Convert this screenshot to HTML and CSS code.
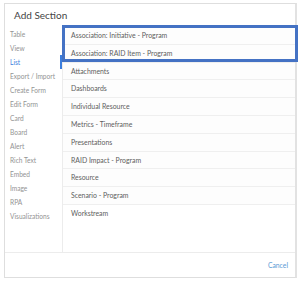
FILE: index.html
```html
<!DOCTYPE html>
<html>
<head>
<meta charset="utf-8">
<link rel="stylesheet" href="styles.css">
</head>
<body>
<div class="dialog">
  <div class="header">Add Section</div>
  <div class="body">
    <ul class="tabs">
      <li>Table</li>
      <li>View</li>
      <li class="active">List</li>
      <li>Export / Import</li>
      <li>Create Form</li>
      <li>Edit Form</li>
      <li>Card</li>
      <li>Board</li>
      <li>Alert</li>
      <li>Rich Text</li>
      <li>Embed</li>
      <li>Image</li>
      <li>RPA</li>
      <li>Visualizations</li>
    </ul>
    <ul class="items">
      <li>Association: Initiative - Program</li>
      <li>Association: RAID Item - Program</li>
      <li>Attachments</li>
      <li>Dashboards</li>
      <li>Individual Resource</li>
      <li>Metrics - Timeframe</li>
      <li>Presentations</li>
      <li>RAID Impact - Program</li>
      <li>Resource</li>
      <li>Scenario - Program</li>
      <li class="last">Workstream</li>
    </ul>
  </div>
  <div class="footer"><span class="cancel">Cancel</span></div>
</div>
<div class="highlight"></div>
</body>
</html>
```
FILE: styles.css
```css
html, body {
  margin: 0;
  padding: 0;
  background: #fff;
  font-family: Lato, "Open Sans", sans-serif;
}
body {
  position: relative;
  width: 300px;
  height: 281px;
  overflow: hidden;
}
.dialog {
  margin: 3px 0 0 4px;
  width: 290px;
  height: 273px;
  border: 1px solid #dedede;
  border-right: 2px solid #e2e2e2;
  display: flex;
  flex-direction: column;
  box-sizing: content-box;
}
.header {
  height: 22px;
  line-height: 22px;
  padding-left: 9px;
  font-size: 10px;
  color: #444;
}
.body {
  flex: 1;
  display: flex;
  min-height: 0;
}
.tabs {
  list-style: none;
  margin: 0;
  padding: 1px 0 0 0;
  width: 57px;
  flex: none;
}
.tabs li {
  height: 14px;
  line-height: 14px;
  padding-left: 5px;
  font-size: 6.6px;
  color: #939393;
  white-space: nowrap;
}
.tabs li.active {
  color: #3b7ddd;
  box-shadow: inset -2px 0 0 #3b7ddd;
}
.items {
  list-style: none;
  margin: 0;
  padding: 0;
  flex: 1;
  border-left: 1px solid #ececec;
  border-top: 1px solid #ececec;
  display: flex;
  flex-direction: column;
}
.items li {
  height: 17.8px;
  line-height: 17px;
  padding-left: 8px;
  font-size: 6.9px;
  color: #5e5e5e;
  border-bottom: 1px solid #efefef;
  box-sizing: border-box;
  background: #fdfdfd;
  white-space: nowrap;
}
.items li.last {
  flex: 1;
  border-bottom: none;
  background: #fff;
}
.footer {
  height: 24px;
  border-top: 1px solid #ececec;
  display: flex;
  align-items: center;
  justify-content: flex-end;
  padding-right: 7px;
}
.cancel {
  font-size: 6.8px;
  color: #5b9bd5;
}
.highlight {
  position: absolute;
  left: 62px;
  top: 25px;
  width: 236px;
  height: 37px;
  border: 3px solid #4472c4;
  box-sizing: border-box;
}
```
